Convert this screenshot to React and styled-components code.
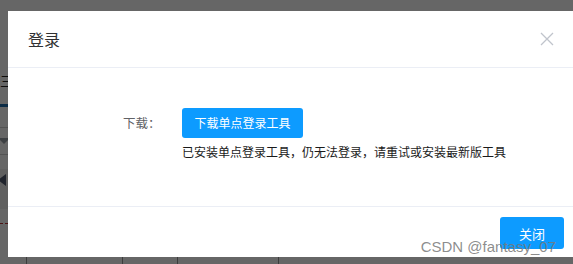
import React from "react";
import styled, { createGlobalStyle } from "styled-components";

const Global = createGlobalStyle`
  html, body { margin: 0; padding: 0; width: 573px; height: 264px; overflow: hidden; background: #fff; }
  body { font-family: "Noto Sans CJK SC", "Noto Sans", sans-serif; }
  * { box-sizing: border-box; }
`;

const Page = styled.div`
  position: relative;
  width: 573px;
  height: 264px;
  overflow: hidden;
  background: #fff;
`;

const Backdrop = styled.div`
  display: flex;
  flex-direction: column;
  width: 100%;
  height: 100%;
`;

const SideStrip = styled.div`
  display: flex;
  flex-direction: column;
  width: 30px;
  padding-top: 72px;
`;

const SideText = styled.div`
  font-size: 14px;
  line-height: 16px;
  color: #222;
  white-space: nowrap;
`;

const SideLine = styled.div`
  height: ${(p) => p.$h || 1}px;
  background: ${(p) => p.$c};
  margin-top: ${(p) => p.$mt}px;
`;

const SideTriangle = styled.div`
  margin-top: ${(p) => p.$mt}px;
  width: 0;
  height: 0;
  border-left: 6px solid transparent;
  border-right: 6px solid transparent;
  border-top: 6px solid #9aa0a8;
  margin-left: -2px;
`;

const SideBlock = styled.div`
  margin-top: 14px;
  height: 40px;
  background: #f0f0f0;
  display: flex;
  align-items: center;
`;

const ArrowShape = styled.div`
  width: 0;
  height: 0;
  border-top: 6px solid transparent;
  border-bottom: 6px solid transparent;
  border-right: 8px solid #505a70;
  margin-left: -2px;
  margin-bottom: 18px;
`;

const Dots = styled.div`
  margin-top: 14px;
  width: 8px;
  height: 1px;
  border-top: 1px dashed #b33;
`;

const BottomRow = styled.div`
  position: absolute;
  left: 0;
  bottom: 0;
  width: 100%;
  height: 8px;
  display: grid;
  grid-template-columns: 26px 96px 55px 101px 1fr;
`;

const Cell = styled.div`
  border-left: 1px solid #9a9a9a;
  &:first-child { border-left: none; }
`;

const Mask = styled.div`
  position: absolute;
  inset: 0;
  background: rgba(0, 0, 0, 0.6);
`;

const Dialog = styled.div`
  position: absolute;
  left: 8px;
  top: 11px;
  width: 580px;
  height: 246px;
  background: #fff;
  display: flex;
  flex-direction: column;
`;

const Header = styled.div`
  height: 57px;
  flex: none;
  display: flex;
  align-items: center;
  justify-content: space-between;
  padding: 0 34px 0 20px;
  border-bottom: 1px solid #ebeef5;
`;

const Title = styled.span`
  font-size: 16px;
  color: #303133;
  line-height: 24px;
`;

const Close = styled.button`
  border: none;
  background: none;
  padding: 0;
  width: 14px;
  height: 14px;
  display: flex;
  align-items: center;
  justify-content: center;
  cursor: pointer;
`;

const Body = styled.div`
  flex: 1;
  padding: 40px 0 0 0;
  border-bottom: 1px solid #ebeef5;
  display: grid;
  grid-template-columns: 174px 1fr;
  align-content: start;
`;

const Label = styled.label`
  font-size: 12.5px;
  color: #606266;
  line-height: 30px;
  padding-left: 115px;
`;

const Field = styled.div`
  display: flex;
  flex-direction: column;
  align-items: flex-start;
`;

const Primary = styled.button`
  border: none;
  border-radius: 3px;
  background: #0d9bff;
  color: #fff;
  font-family: inherit;
  font-size: ${(p) => p.$fs || 12}px;
  height: ${(p) => p.$h || 30}px;
  width: ${(p) => p.$w}px;
  padding: 0;
  cursor: pointer;
  line-height: 1;
`;

const Hint = styled.p`
  margin: 4px 0 0;
  font-size: 12px;
  line-height: 20px;
  color: #1a1a1a;
  white-space: nowrap;
`;

const Footer = styled.div`
  height: 50px;
  flex: none;
  display: flex;
  justify-content: flex-end;
  align-items: flex-start;
  padding: 10px 24px 0 0;
`;

const Watermark = styled.div`
  position: absolute;
  right: 17px;
  bottom: 8px;
  font-family: "Liberation Sans", Arial, sans-serif;
  font-size: 15px;
  line-height: 18px;
  color: rgba(120, 120, 120, 0.85);
  pointer-events: none;
`;

export default function App() {
  return (
    <Page>
      <Global />
      <Backdrop>
        <SideStrip>
          <SideText>三才</SideText>
          <SideLine $c="#1f6fb0" $h={3} $mt={16} />
          <SideLine $c="#d0d0d0" $mt={20} />
          <SideTriangle $mt={10} />
          <SideLine $c="#d0d0d0" $mt={10} />
          <SideBlock>
            <ArrowShape />
          </SideBlock>
          <Dots />
        </SideStrip>
        <BottomRow>
          <Cell />
          <Cell />
          <Cell />
          <Cell />
          <Cell />
        </BottomRow>
      </Backdrop>
      <Mask />
      <Dialog>
        <Header>
          <Title>登录</Title>
          <Close aria-label="close">
            <svg width="14" height="14" viewBox="0 0 14 14">
              <path d="M1 1L13 13M13 1L1 13" stroke="#c0c4cc" strokeWidth="1.3" fill="none" />
            </svg>
          </Close>
        </Header>
        <Body>
          <Label>下载：</Label>
          <Field>
            <Primary $w={121}>下载单点登录工具</Primary>
            <Hint>已安装单点登录工具，仍无法登录，请重试或安装最新版工具</Hint>
          </Field>
        </Body>
        <Footer>
          <Primary $w={64} $h={32} $fs={13}>关闭</Primary>
        </Footer>
      </Dialog>
      <Watermark>CSDN @fantasy_07</Watermark>
    </Page>
  );
}
